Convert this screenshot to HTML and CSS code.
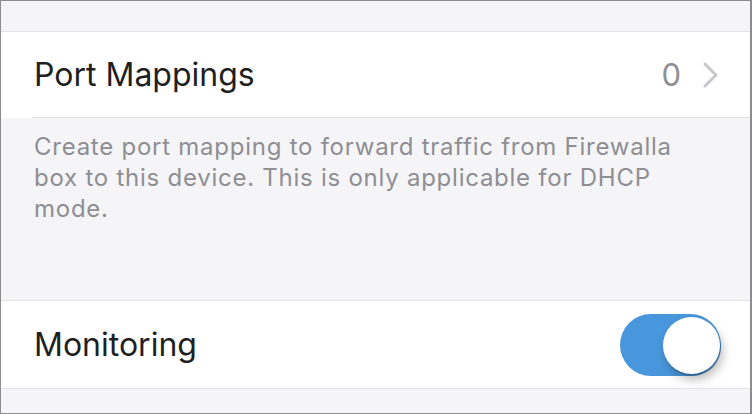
FILE: index.html
```html
<!DOCTYPE html>
<html lang="en">
<head>
    <meta charset="UTF-8">
    <meta name="viewport" content="width=device-width, initial-scale=1.0">
    <title>Device Settings</title>
    <link rel="stylesheet" href="styles.css">
</head>
<body>
    <div class="screen">
        <div class="section-gap"></div>

        <div class="group group-inset">
            <div class="row row-first">
                <span class="row-label">Port Mappings</span>
                <span class="row-detail">
                    <span class="row-value">0</span>
                    <svg class="chevron" width="16" height="26" viewBox="0 0 16 26">
                        <path d="M2 2 L13 13 L2 24" fill="none" stroke="#c7c7cc" stroke-width="3" stroke-linecap="round" stroke-linejoin="round"/>
                    </svg>
                </span>
            </div>
        </div>

        <p class="group-footer">Create port mapping to forward traffic from Firewalla box to this device. This is only applicable for DHCP mode.</p>

        <div class="group">
            <div class="row row-second">
                <span class="row-label">Monitoring</span>
                <div class="switch on">
                    <div class="knob"></div>
                </div>
            </div>
        </div>
    </div>
</body>
</html>
```

FILE: styles.css
```css
:root {
    --background-color: #f5f5f7;
    --separator-color: #e2e2e5;
    --text-color: #1f1f1f;
    --muted-color: #8e8e93;
    --accent-color: #4896db;
}

* {
    box-sizing: border-box;
}

body {
    margin: 0;
    font-family: 'Inter', 'Liberation Sans', sans-serif;
    color: var(--text-color);
}

.screen {
    width: 752px;
    height: 414px;
    background-color: var(--background-color);
    border: 1px solid #8c8c8c;
    border-right-width: 2px;
    overflow: hidden;
}

.section-gap {
    height: 30px;
}

.group {
    background-color: #fff;
    border-top: 1px solid var(--separator-color);
    border-bottom: 1px solid var(--separator-color);
}

/* last separator is inset like the iOS cells */
.group-inset {
    border-bottom: none;
}

.group-inset .row {
    margin-left: 31px;
    padding-left: 2px;
    border-bottom: 1px solid var(--separator-color);
}

.row {
    display: flex;
    align-items: center;
    justify-content: space-between;
    padding: 0 28px 0 33px;
}

.row-first {
    height: 86px;
}

.row-second {
    height: 87px;
}

.row-label {
    font-size: 32px;
    font-weight: 400;
    letter-spacing: 0;
}

.row-detail {
    display: flex;
    align-items: center;
    gap: 22px;
    margin-right: 3px;
}

.row-value {
    font-size: 31px;
    color: var(--muted-color);
}

.chevron {
    display: block;
}

.group-footer {
    height: 182px;
    margin: 0;
    padding: 13px 48px 0 33px;
    font-size: 24px;
    letter-spacing: 0.75px;
    line-height: 31px;
    color: var(--muted-color);
}

.switch {
    position: relative;
    width: 101px;
    height: 62px;
    border-radius: 31px;
    background-color: var(--accent-color);
    margin-right: 1px;
}

.knob {
    position: absolute;
    top: 3px;
    right: 1px;
    width: 57px;
    height: 57px;
    border-radius: 50%;
    background-color: #fff;
    box-shadow: 1px 2px 0 rgba(40, 90, 140, 0.6), 3px 6px 10px rgba(0, 0, 0, 0.25);
}
```
